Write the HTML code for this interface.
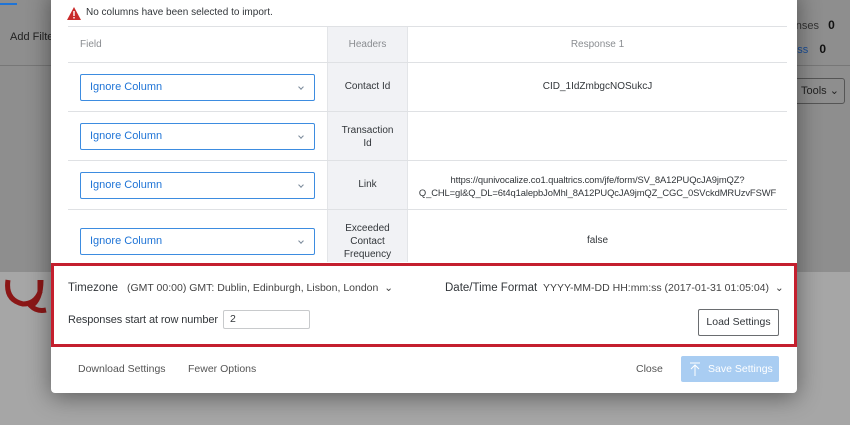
<!DOCTYPE html>
<html><head><style>
*{margin:0;padding:0;box-sizing:border-box}
body{width:850px;height:425px;overflow:hidden;background:#a6a6a6;font-family:"Liberation Sans",Arial,sans-serif;position:relative;color:#32363a}
.bgtop{position:absolute;left:0;top:0;width:850px;height:272px;background:#8e8e8e}
.abs{position:absolute}
.modal{position:absolute;left:51px;top:-10px;width:746px;height:403px;background:#fff;border-radius:4px;box-shadow:0 4px 24px rgba(0,0,0,.45)}
.t{font-size:11px;white-space:nowrap}
.dd{position:absolute;left:80px;width:235px;height:27px;border:1px solid #3d8ce0;border-radius:2px;color:#1f74d6;font-size:11px;line-height:25px;padding-left:9px}
.dd:after{content:"";position:absolute;right:11px;top:10px;width:3px;height:3px;border-right:1px solid #7a8a9a;border-bottom:1px solid #7a8a9a;transform:rotate(45deg)}
.hl{position:absolute;left:68px;width:719px;height:1px;background:#dfe1e4}
.c{text-align:center;font-size:10px;color:#32363a;position:absolute;white-space:nowrap}
</style></head><body>
<div class="bgtop"></div>
<div class="abs" style="left:0;top:3px;width:17px;height:2px;background:#1f74d6"></div>
<div class="abs t" style="left:10px;top:31px;font-size:11px;color:#222">Add Filte</div>
<div class="abs" style="left:0;top:65px;width:850px;height:1px;background:#777"></div>
<div class="abs t" style="left:764px;top:18px;color:#333">Responses <b style="margin-left:6px;font-size:12px;color:#111">0</b></div>
<div class="abs t" style="left:752px;top:42px;color:#1a4f9a">In Progress <b style="margin-left:8px;font-size:12px;color:#111">0</b></div>
<div class="abs" style="left:790px;top:78px;width:55px;height:26px;border:1px solid #555;border-radius:3px;font-size:11px;line-height:24px;padding-left:10px;color:#222">Tools ⌄</div>
<svg class="abs" style="left:5px;top:278px" width="42" height="40" viewBox="0 0 42 40"><path d="M3 2 Q0 22 18 26 Q30 26 35 14 L35 2 M36 2 Q36 22 26 28 Q32 34 41 32" fill="none" stroke="#8b1717" stroke-width="5"/></svg>

<div class="modal">
 <svg class="abs" style="left:16px;top:17px" width="14" height="13" viewBox="0 0 14 13"><path d="M7 0 L14 13 L0 13Z" fill="#c92a2a"/><rect x="6.3" y="4" width="1.4" height="5" fill="#fff"/><rect x="6.3" y="10" width="1.4" height="1.5" fill="#fff"/></svg>
 <div class="abs t" style="left:35px;top:17px;font-size:10px">No columns have been selected to import.</div>
</div>
<div class="hl" style="top:26px"></div>
<div class="abs" style="left:327px;top:27px;width:81px;height:235px;background:#f1f2f5;border-left:1px solid #e3e5e8;border-right:1px solid #e3e5e8"></div>
<div class="abs t" style="left:80px;top:39px;font-size:10px;color:#8a8d91">Field</div>
<div class="c" style="left:327px;width:81px;top:39px;color:#8a8d91">Headers</div>
<div class="c" style="left:408px;width:379px;top:39px;color:#8a8d91">Response 1</div>
<div class="hl" style="top:62px"></div>
<div class="hl" style="top:111px"></div>
<div class="hl" style="top:160px"></div>
<div class="hl" style="top:209px"></div>
<div class="dd" style="top:74px">Ignore Column</div>
<div class="dd" style="top:123px">Ignore Column</div>
<div class="dd" style="top:172px">Ignore Column</div>
<div class="dd" style="top:228px">Ignore Column</div>
<div class="c" style="left:327px;width:81px;top:81px">Contact Id</div>
<div class="c" style="left:327px;width:81px;top:124px;line-height:13px">Transaction<br>Id</div>
<div class="c" style="left:327px;width:81px;top:179px">Link</div>
<div class="c" style="left:327px;width:81px;top:222px;line-height:13px">Exceeded<br>Contact<br>Frequency</div>
<div class="c" style="left:408px;width:379px;top:81px">CID_1IdZmbgcNOSukcJ</div>
<div class="c" style="left:408px;width:379px;top:173px;line-height:13px;font-size:9.4px;letter-spacing:-0.1px">https://qunivocalize.co1.qualtrics.com/jfe/form/SV_8A12PUQcJA9jmQZ?<br>Q_CHL=gl&amp;Q_DL=6t4q1alepbJoMhl_8A12PUQcJA9jmQZ_CGC_0SVckdMRUzvFSWF</div>
<div class="c" style="left:408px;width:379px;top:235px">false</div>

<div class="abs" style="left:51px;top:263px;width:746px;height:84px;border:3px solid #c41f2e;background:#fff"></div>
<div class="abs t" style="left:68px;top:282px;font-size:11.5px">Timezone</div>
<div class="abs t" style="left:127px;top:282px;font-size:10.5px;color:#444">(GMT 00:00) GMT: Dublin, Edinburgh, Lisbon, London &nbsp;⌄</div>
<div class="abs t" style="left:68px;top:314px;font-size:11px;letter-spacing:-0.1px">Responses start at row number</div>
<div class="abs" style="left:223px;top:310px;width:87px;height:19px;border:1px solid #c8cacc;border-radius:2px;font-size:10.5px;line-height:17px;padding-left:6px">2</div>
<div class="abs t" style="left:445px;top:282px;font-size:11.5px">Date/Time Format</div>
<div class="abs t" style="left:543px;top:282px;font-size:10.5px;color:#444">YYYY-MM-DD HH:mm:ss (2017-01-31 01:05:04) &nbsp;⌄</div>
<div class="abs" style="left:698px;top:309px;width:81px;height:27px;border:1px solid #6a6d70;border-radius:2px;font-size:10.5px;line-height:25px;text-align:center">Load Settings</div>

<div class="abs t" style="left:78px;top:363px;font-size:10.5px;color:#555">Download Settings</div>
<div class="abs t" style="left:188px;top:363px;font-size:10.5px;color:#555">Fewer Options</div>
<div class="abs t" style="left:636px;top:363px;font-size:10.5px;color:#555">Close</div>
<div class="abs" style="left:681px;top:356px;width:98px;height:26px;background:#a9cdf2;border-radius:2px;color:#fff;font-size:10.5px;line-height:26px;padding-left:27px">Save Settings</div>
<svg class="abs" style="left:689px;top:362px" width="12" height="14" viewBox="0 0 12 14"><path d="M1 1H11M6 3V14M2 7L6 3L10 7" fill="none" stroke="#fff" stroke-width="1"/></svg>
</body></html>
